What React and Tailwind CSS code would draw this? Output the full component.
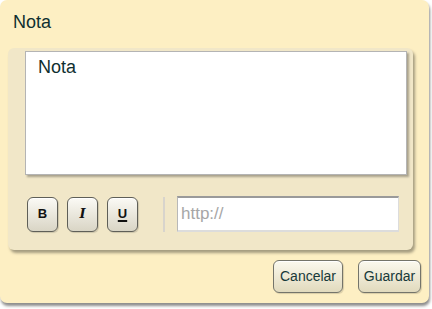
import React from 'react';

const font = { fontFamily: '"Liberation Sans", Arial, sans-serif' };

function ToolButton({ children, className = '' }) {
  return (
    <button
      className={`w-[31px] h-[35px] rounded-[6px] border border-[#5f5f58] bg-gradient-to-b from-[#fbfaf5] to-[#d9d5c5] text-[13px] font-bold text-[#111] flex items-center justify-center shadow-[inset_0_1px_0_#fff,1px_1px_1px_rgba(0,0,0,0.15)] ${className}`}
    >
      {children}
    </button>
  );
}

function ActionButton({ children, className = '' }) {
  return (
    <button
      className={`h-[33px] rounded-[6px] border border-[#74746a] bg-gradient-to-b from-[#fbf9ee] to-[#e1dabd] text-[14px] text-[#17393a] flex items-center justify-center shadow-[inset_0_1px_0_#fff,1px_1px_1px_rgba(0,0,0,0.15)] ${className}`}
    >
      {children}
    </button>
  );
}

export default function App() {
  return (
    <div className="w-[432px] h-[309px] bg-white" style={font}>
      <div className="w-[429px] h-[303px] rounded-[7px] bg-[#fdefc3] shadow-[1px_3px_3px_rgba(0,0,0,0.45)] flex flex-col">
        {/* Title */}
        <div className="h-[48px] pl-[13px] pt-[13px] text-[18px] leading-none text-[#0f2f30]">Nota</div>

        {/* Editor panel */}
        <div className="ml-[8px] w-[405px] h-[202px] rounded-[6px] bg-[#f1e7c8] shadow-[2px_3px_3px_rgba(0,0,0,0.35)] pl-[17px] pr-[6px] pt-[3px]">
          <div className="h-[124px] bg-white border border-[#b4b4b4] shadow-[2px_2px_2px_rgba(0,0,0,0.3)] pl-[12px] pt-[6px] text-[18px] leading-none text-[#0f2f30]">
            Nota
          </div>

          <div className="mt-[21px] flex items-center pl-[2px]">
            <div className="flex gap-[9px]">
              <ToolButton>B</ToolButton>
              <ToolButton className="italic">
                <span style={{ fontFamily: '"DejaVu Serif", serif' }} className="text-[13px]">I</span>
              </ToolButton>
              <ToolButton>
                <span className="underline decoration-[2px] underline-offset-[2px]">U</span>
              </ToolButton>
            </div>
            <div className="ml-[25px] w-[2px] h-[35px] bg-[#d8d4cc]" />
            <div className="ml-[12px] w-[222px] h-[36px] bg-white border-t-2 border-l border-t-[#9a9a9a] border-l-[#b8b8b8] border-r border-b-2 border-r-[#dcdcdc] border-b-[#dcdcdc] flex items-center pl-[3px] text-[17px] text-[#a6a6a6]">
              http://
            </div>
          </div>
        </div>

        {/* Actions */}
        <div className="mt-[10px] flex justify-end gap-[15px] pr-[8px]">
          <ActionButton className="w-[70px]">Cancelar</ActionButton>
          <ActionButton className="w-[63px]">Guardar</ActionButton>
        </div>
      </div>
    </div>
  );
}
